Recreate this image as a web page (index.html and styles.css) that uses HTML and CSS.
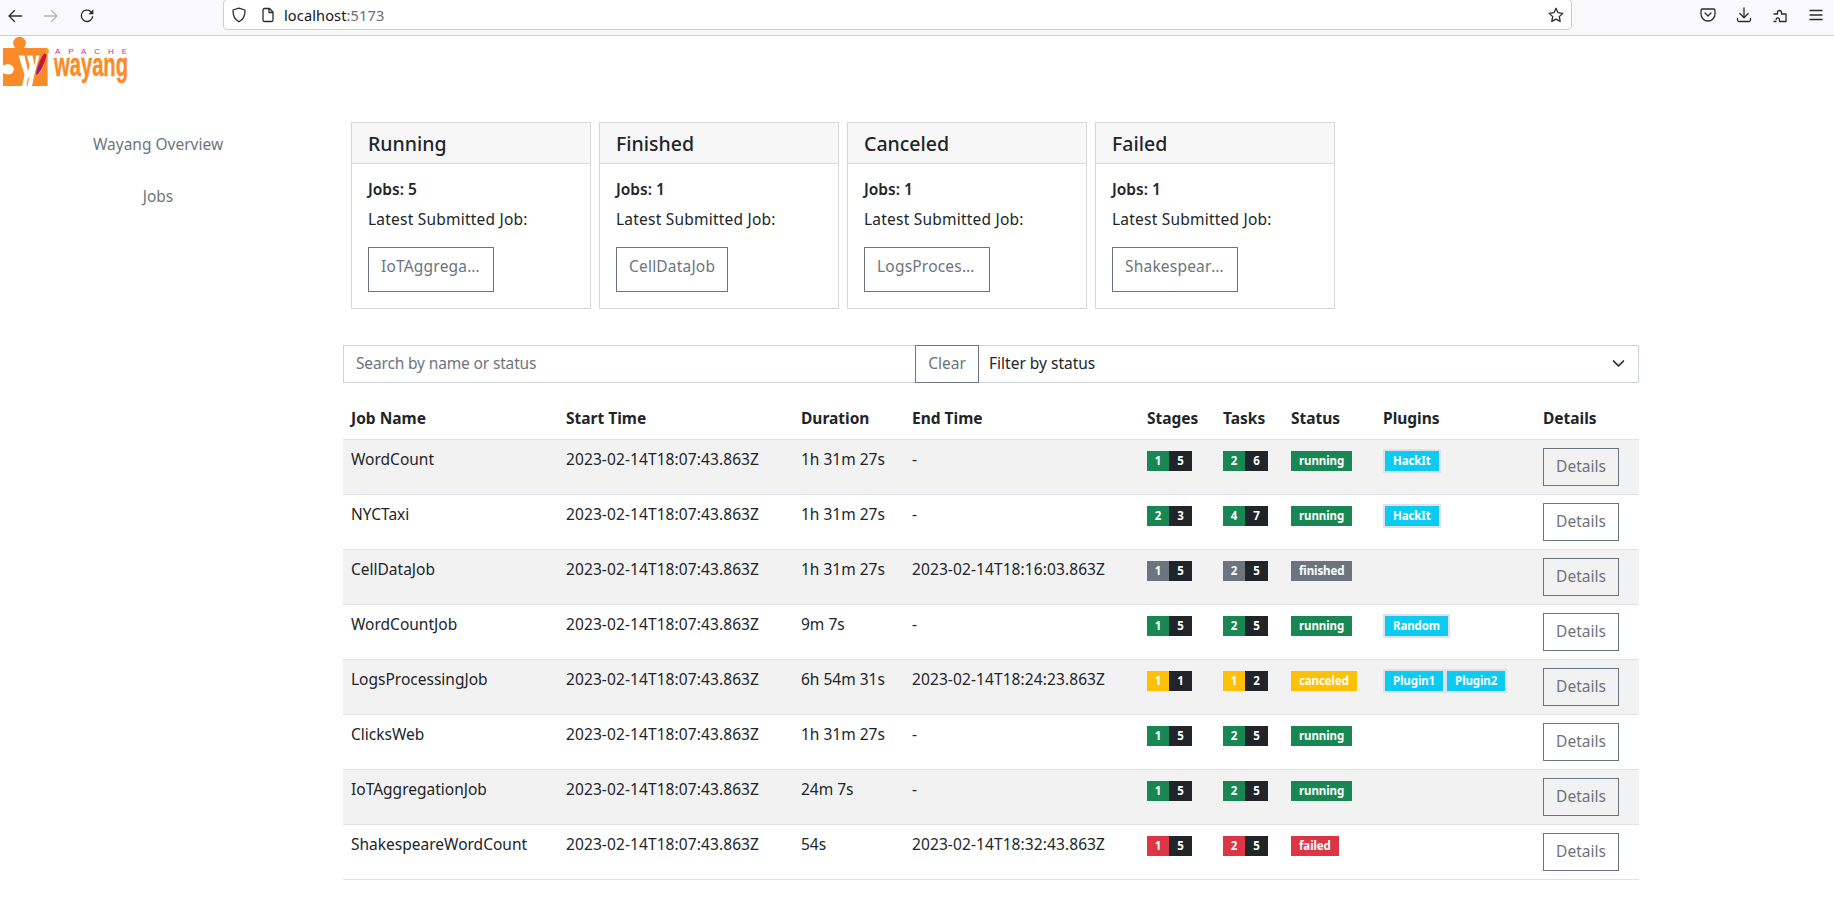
FILE: index.html
```html
<!DOCTYPE html>
<html lang="en">
<head>
<meta charset="utf-8">
<title>Apache Wayang</title>
<link rel="stylesheet" href="styles.css">
</head>
<body>
<header class="browser">
  <div class="nav-icons">
    <svg class="ic" viewBox="0 0 16 16"><path d="M14.5 8H2M7.5 2.500 2 8l5.500 5.500"/></svg>
    <svg class="ic dim" viewBox="0 0 16 16"><path d="M1.500 8H14M8.500 2.500 14 8l-5.500 5.500"/></svg>
    <svg class="ic" viewBox="0 0 16 16"><path d="M13.600 8.600A5.700 5.700 0 1 1 11.600 3.400"/><path class="solid" d="M14.400 1.200v5h-5z"/></svg>
  </div>
  <div class="urlbar">
    <svg class="ic shield" viewBox="0 0 16 16"><path d="M8 1.200 14 3c.2 5.400-1.300 9.300-6 11.800C3.300 12.300 1.800 8.400 2 3z"/></svg>
    <svg class="ic page" viewBox="0 0 16 16"><path d="M3 3a1.500 1.500 0 0 1 1.500-1.500h5L13 5v8a1.500 1.500 0 0 1-1.500 1.500h-7A1.500 1.500 0 0 1 3 13zM9 1.500V5.500h4"/></svg>
    <span class="url">localhost<span class="port">:5173</span></span>
    <svg class="ic star" viewBox="0 0 16 16"><path d="m8 1.300 2 4.400 4.800.6-3.500 3.300.9 4.800L8 12.100l-4.200 2.300.9-4.800L1.200 6.300 6 5.700z"/></svg>
  </div>
  <div class="tool-icons">
    <svg class="ic" viewBox="0 0 16 16"><path d="M2.500 2h11A1.500 1.500 0 0 1 15 3.500V7a7 7 0 0 1-14 0V3.500A1.500 1.500 0 0 1 2.500 2zM5 6l3 3 3-3"/></svg>
    <svg class="ic" viewBox="0 0 16 16"><path d="M8 1v9.500M3.800 6.500 8 10.700l4.200-4.200M1.500 11.500v1.500c0 1 .5 1.500 1.500 1.500h10c1 0 1.500-.5 1.500-1.500v-1.500"/></svg>
    <svg class="ic" viewBox="0 0 16 16"><path d="M2 7h3.500V5.500a2 2 0 1 1 4 0V7h4.500v7.500H7.500v-2a1.700 1.700 0 1 0-3.400 0M2 14.500h2"/></svg>
    <svg class="ic" viewBox="0 0 16 16"><path d="M2 3.500h12M2 8h12M2 12.500h12"/></svg>
  </div>
</header>

<div class="logo">
  <svg width="128" height="52" viewBox="0 0 128 52">
    <path fill="#fb8a28" d="M3 12h12.500c-1-1-2.300-2.500-2.300-5a6.300 6.300 0 0 1 12.600 0c0 2.500-1.300 4-2.300 5H47.500v38H3V37c2.500 1.500 6 2 8.500.5 3-1.800 3-6.500 0-8.300C9 27.700 5.500 28.200 3 29.700z"/>
    <path fill="#fff" d="M18.500 19.500h6l3.500 16 1.500-6-2.500-10h5.500l2 10 1.500-10h3.500L35 36l-3 14h-4.500l1.700-8.500-1.500 1-1.200 7.500h-4.500l2.500-11z"/>
    <path fill="#8e1f8a" d="M36 38.500c.2-3 1-6 2.200-9l4.300 1c-1.500 3.500-3.700 6.500-5.700 8.300z"/>
    <path fill="#c9163f" d="M38 30c1.500-5 3.700-9.500 6.700-13l2 .5c-.4 4.500-2 9-4.500 13.500z"/>
    <path fill="#f7a11f" d="M44.500 17.500c.8-2 1.900-3.800 3.500-5 1.500 1.500 1.300 3.500-.8 6z"/>
    <text class="apache" x="55" y="18" textLength="72">APACHE</text>
    <text class="wayang" x="54" y="40" textLength="74" lengthAdjust="spacingAndGlyphs">wayang</text>
  </svg>
</div>

<div class="layout">
  <nav class="sidebar">
    <a class="side-link" href="#">Wayang Overview</a>
    <a class="side-link" href="#">Jobs</a>
  </nav>

  <main class="content">
    <section class="cards">
      <article class="card">
        <h5 class="card-head">Running</h5>
        <div class="card-body">
          <p class="jobs">Jobs: 5</p>
          <p class="latest">Latest Submitted Job:</p>
          <a class="job-btn" href="#">IoTAggregationJob</a>
        </div>
      </article>
      <article class="card">
        <h5 class="card-head">Finished</h5>
        <div class="card-body">
          <p class="jobs">Jobs: 1</p>
          <p class="latest">Latest Submitted Job:</p>
          <a class="job-btn" href="#">CellDataJob</a>
        </div>
      </article>
      <article class="card">
        <h5 class="card-head">Canceled</h5>
        <div class="card-body">
          <p class="jobs">Jobs: 1</p>
          <p class="latest">Latest Submitted Job:</p>
          <a class="job-btn" href="#">LogsProcessingJob</a>
        </div>
      </article>
      <article class="card">
        <h5 class="card-head">Failed</h5>
        <div class="card-body">
          <p class="jobs">Jobs: 1</p>
          <p class="latest">Latest Submitted Job:</p>
          <a class="job-btn" href="#">ShakespeareWordCount</a>
        </div>
      </article>
    </section>

    <section class="filters">
      <input class="search" type="text" placeholder="Search by name or status">
      <button class="clear" type="button">Clear</button>
      <div class="select">
        <span>Filter by status</span>
        <svg class="chev" viewBox="0 0 16 16"><path d="m2 5 6 6 6-6"/></svg>
      </div>
    </section>

    <table class="jobs-table">
      <colgroup>
        <col class="c-name"><col class="c-start"><col class="c-dur"><col class="c-end"><col class="c-stages"><col class="c-tasks"><col class="c-status"><col class="c-plugins"><col class="c-details">
      </colgroup>
      <thead>
        <tr><th>Job Name</th><th>Start Time</th><th>Duration</th><th>End Time</th><th>Stages</th><th>Tasks</th><th>Status</th><th>Plugins</th><th>Details</th></tr>
      </thead>
      <tbody>
        <tr>
          <td>WordCount</td><td>2023-02-14T18:07:43.863Z</td><td>1h 31m 27s</td><td>-</td>
          <td><span class="pair"><b class="bd ok">1</b><b class="bd dark">5</b></span></td>
          <td><span class="pair"><b class="bd ok">2</b><b class="bd dark">6</b></span></td>
          <td><b class="bd ok">running</b></td>
          <td><span class="plugins"><b class="bd info">HackIt</b></span></td>
          <td><button class="details" type="button">Details</button></td>
        </tr>
        <tr>
          <td>NYCTaxi</td><td>2023-02-14T18:07:43.863Z</td><td>1h 31m 27s</td><td>-</td>
          <td><span class="pair"><b class="bd ok">2</b><b class="bd dark">3</b></span></td>
          <td><span class="pair"><b class="bd ok">4</b><b class="bd dark">7</b></span></td>
          <td><b class="bd ok">running</b></td>
          <td><span class="plugins"><b class="bd info">HackIt</b></span></td>
          <td><button class="details" type="button">Details</button></td>
        </tr>
        <tr>
          <td>CellDataJob</td><td>2023-02-14T18:07:43.863Z</td><td>1h 31m 27s</td><td>2023-02-14T18:16:03.863Z</td>
          <td><span class="pair"><b class="bd sec">1</b><b class="bd dark">5</b></span></td>
          <td><span class="pair"><b class="bd sec">2</b><b class="bd dark">5</b></span></td>
          <td><b class="bd sec">finished</b></td>
          <td></td>
          <td><button class="details" type="button">Details</button></td>
        </tr>
        <tr>
          <td>WordCountJob</td><td>2023-02-14T18:07:43.863Z</td><td>9m 7s</td><td>-</td>
          <td><span class="pair"><b class="bd ok">1</b><b class="bd dark">5</b></span></td>
          <td><span class="pair"><b class="bd ok">2</b><b class="bd dark">5</b></span></td>
          <td><b class="bd ok">running</b></td>
          <td><span class="plugins"><b class="bd info">Random</b></span></td>
          <td><button class="details" type="button">Details</button></td>
        </tr>
        <tr>
          <td>LogsProcessingJob</td><td>2023-02-14T18:07:43.863Z</td><td>6h 54m 31s</td><td>2023-02-14T18:24:23.863Z</td>
          <td><span class="pair"><b class="bd warn">1</b><b class="bd dark">1</b></span></td>
          <td><span class="pair"><b class="bd warn">1</b><b class="bd dark">2</b></span></td>
          <td><b class="bd warn">canceled</b></td>
          <td><span class="plugins"><b class="bd info">Plugin1</b><b class="bd info">Plugin2</b></span></td>
          <td><button class="details" type="button">Details</button></td>
        </tr>
        <tr>
          <td>ClicksWeb</td><td>2023-02-14T18:07:43.863Z</td><td>1h 31m 27s</td><td>-</td>
          <td><span class="pair"><b class="bd ok">1</b><b class="bd dark">5</b></span></td>
          <td><span class="pair"><b class="bd ok">2</b><b class="bd dark">5</b></span></td>
          <td><b class="bd ok">running</b></td>
          <td></td>
          <td><button class="details" type="button">Details</button></td>
        </tr>
        <tr>
          <td>IoTAggregationJob</td><td>2023-02-14T18:07:43.863Z</td><td>24m 7s</td><td>-</td>
          <td><span class="pair"><b class="bd ok">1</b><b class="bd dark">5</b></span></td>
          <td><span class="pair"><b class="bd ok">2</b><b class="bd dark">5</b></span></td>
          <td><b class="bd ok">running</b></td>
          <td></td>
          <td><button class="details" type="button">Details</button></td>
        </tr>
        <tr>
          <td>ShakespeareWordCount</td><td>2023-02-14T18:07:43.863Z</td><td>54s</td><td>2023-02-14T18:32:43.863Z</td>
          <td><span class="pair"><b class="bd bad">1</b><b class="bd dark">5</b></span></td>
          <td><span class="pair"><b class="bd bad">2</b><b class="bd dark">5</b></span></td>
          <td><b class="bd bad">failed</b></td>
          <td></td>
          <td><button class="details" type="button">Details</button></td>
        </tr>
      </tbody>
    </table>
  </main>
</div>
</body>
</html>
```

FILE: styles.css
```css
* { box-sizing: border-box; }
html, body { margin: 0; padding: 0; }
body {
  background: #fff;
  color: #212529;
  font-family: "Noto Sans", "DejaVu Sans", sans-serif;
  font-size: 16px;
  line-height: 24px;
  height: 924px;
  overflow: hidden;
}

/* browser chrome */
.browser {
  height: 36px;
  background: #f9f9fb;
  border-bottom: 1px solid #cfcfd2;
  display: flex;
  align-items: flex-start;
}
.ic { width: 16px; height: 16px; fill: none; stroke: #2b2a33; stroke-width: 1.3; stroke-linecap: round; stroke-linejoin: round; flex: none; }
.ic .solid { fill: #2b2a33; stroke: none; }
.ic.dim { stroke: #b4b4b8; }
.nav-icons { width: 223px; display: flex; gap: 20px; padding: 8px 0 0 7px; }
.urlbar {
  width: 1349px;
  height: 31px;
  margin-top: -1px;
  background: #fff;
  border: 1px solid #cfcfd2;
  border-radius: 4px;
  display: flex;
  align-items: center;
  padding: 0 7px 0 7px;
}
.shield { margin-right: 13px; }
.page { margin-right: 8px; }
.url { font-size: 14.6px; line-height: 20px; flex: 1; color: #15141a; letter-spacing: .1px; }
.port { color: #6e6e73; }
.tool-icons { flex: 1; display: flex; justify-content: flex-end; gap: 20px; padding: 7px 10px 0 0; }

/* logo */
.logo { height: 52px; }
.logo svg { display: block; overflow: visible; }
.apache { font: 400 8px "Liberation Sans", sans-serif; fill: #c2357e; }
.wayang { font: 700 33px "Liberation Sans", sans-serif; fill: #fb8a28; stroke: #fb8a28; stroke-width: .4; }

/* layout */
.layout { display: flex; }
.sidebar { width: 316px; flex: none; display: flex; flex-direction: column; align-items: center; padding-top: 36px; }
.side-link { color: #6c757d; text-decoration: none; padding: 8px 16px; margin-bottom: 12px; font-size: 15.5px; line-height: 24px; height: 40px; }
.content { width: 1296px; margin-left: 27px; padding-top: 34px; }

/* cards */
.cards { display: flex; gap: 8px; padding-left: 8px; }
.card { width: 240px; height: 187px; border: 1px solid #d5d7d9; }
.card-head {
  margin: 0;
  padding: 9px 16px 7px;
  height: 41px;
  font-size: 19.5px;
  line-height: 24px;
  font-weight: 500;
  background: #f7f7f7;
  border-bottom: 1px solid #d5d7d9;
}
.card-body { padding: 12px 16px 0; }
.jobs, .latest { margin: 0; font-size: 15.5px; line-height: 24px; }
.jobs { font-weight: 600; height: 30px; padding-top: 1px; }
.latest { height: 41px; padding-top: 1px; letter-spacing: .22px; }
.job-btn {
  display: block;
  overflow: hidden;
  white-space: nowrap;
  text-overflow: ellipsis;
  width: fit-content;
  max-width: 126px;
  height: 45px;
  padding: 6px 12px;
  border: 1px solid #6c757d;
  color: #6c757d;
  text-decoration: none;
  font-size: 15.5px;
  letter-spacing: .2px;
}

/* filters */
.filters { display: flex; height: 38px; margin-top: 36px; }
.search {
  width: 572px;
  height: 38px;
  padding: 4px 12px 6px;
  border: 1px solid #ced4da;
  border-right: 0;
  border-radius: 0;
  font: inherit;
  font-size: 15.5px;
  letter-spacing: -.15px;
  color: #212529;
  outline: none;
}
.search::placeholder { color: #6c757d; opacity: 1; }
.clear {
  width: 64px;
  height: 38px;
  padding: 0 0 2px;
  background: #fff;
  border: 1px solid #6c757d;
  border-radius: 0;
  color: #6c757d;
  font: inherit;
  font-size: 15.5px;
}
.select {
  flex: 1;
  height: 38px;
  display: flex;
  align-items: center;
  justify-content: space-between;
  padding: 0 13px 2px 10px;
  border: 1px solid #ced4da;
  border-left: 0;
  font-size: 15.5px;
}
.chev { width: 13px; height: 13px; fill: none; stroke: #343a40; stroke-width: 2.2; stroke-linecap: round; stroke-linejoin: round; }

/* table */
.jobs-table { width: 1296px; margin-top: 16px; border-collapse: collapse; table-layout: fixed; }
.c-name { width: 215px; }
.c-start { width: 235px; }
.c-dur { width: 111px; }
.c-end { width: 235px; }
.c-stages { width: 76px; }
.c-tasks { width: 68px; }
.c-status { width: 92px; }
.c-plugins { width: 160px; }
.c-details { width: 104px; }
.jobs-table th {
  text-align: left;
  height: 40px;
  padding: 7px 8px 9px;
  font-size: 15.5px;
  font-weight: 700;
  border-bottom: 1px solid #dee2e6;
}
.jobs-table td {
  height: 55px;
  padding: 7px 8px 8px;
  vertical-align: top;
  font-size: 15.5px;
  border-bottom: 1px solid #dee2e6;
  white-space: nowrap;
}
.jobs-table td:nth-child(2), .jobs-table td:nth-child(4) { letter-spacing: .1px; }
.jobs-table tbody tr:nth-child(odd) { background: #f2f2f2; }

.bd {
  display: inline-block;
  height: 20px;
  padding: 4px 8px;
  font-size: 11.5px;
  line-height: 12px;
  font-weight: 700;
  letter-spacing: -.1px;
  color: #fff;
  vertical-align: top;
}
.pair { display: inline-flex; margin-top: 4px; }
.pair .bd { width: 22px; padding: 4px 0; text-align: center; }
.pair .bd + .bd { width: 23px; }
td > .bd { margin-top: 4px; }
.ok { background: #198754; }
.dark { background: #212529; }
.sec { background: #6c757d; }
.warn { background: #ffc107; }
.bad { background: #dc3545; }
.info { background: #0dcaf0; }
.plugins { display: inline-flex; gap: 4px; margin-top: 2px; padding: 2px; background: #dee2e6; }
.details {
  display: block;
  width: 76px;
  height: 38px;
  margin-top: 1px;
  padding: 0 0 2px;
  background: transparent;
  border: 1px solid #6c757d;
  border-radius: 0;
  color: #6c757d;
  font: inherit;
  font-size: 15.5px;
}
```
